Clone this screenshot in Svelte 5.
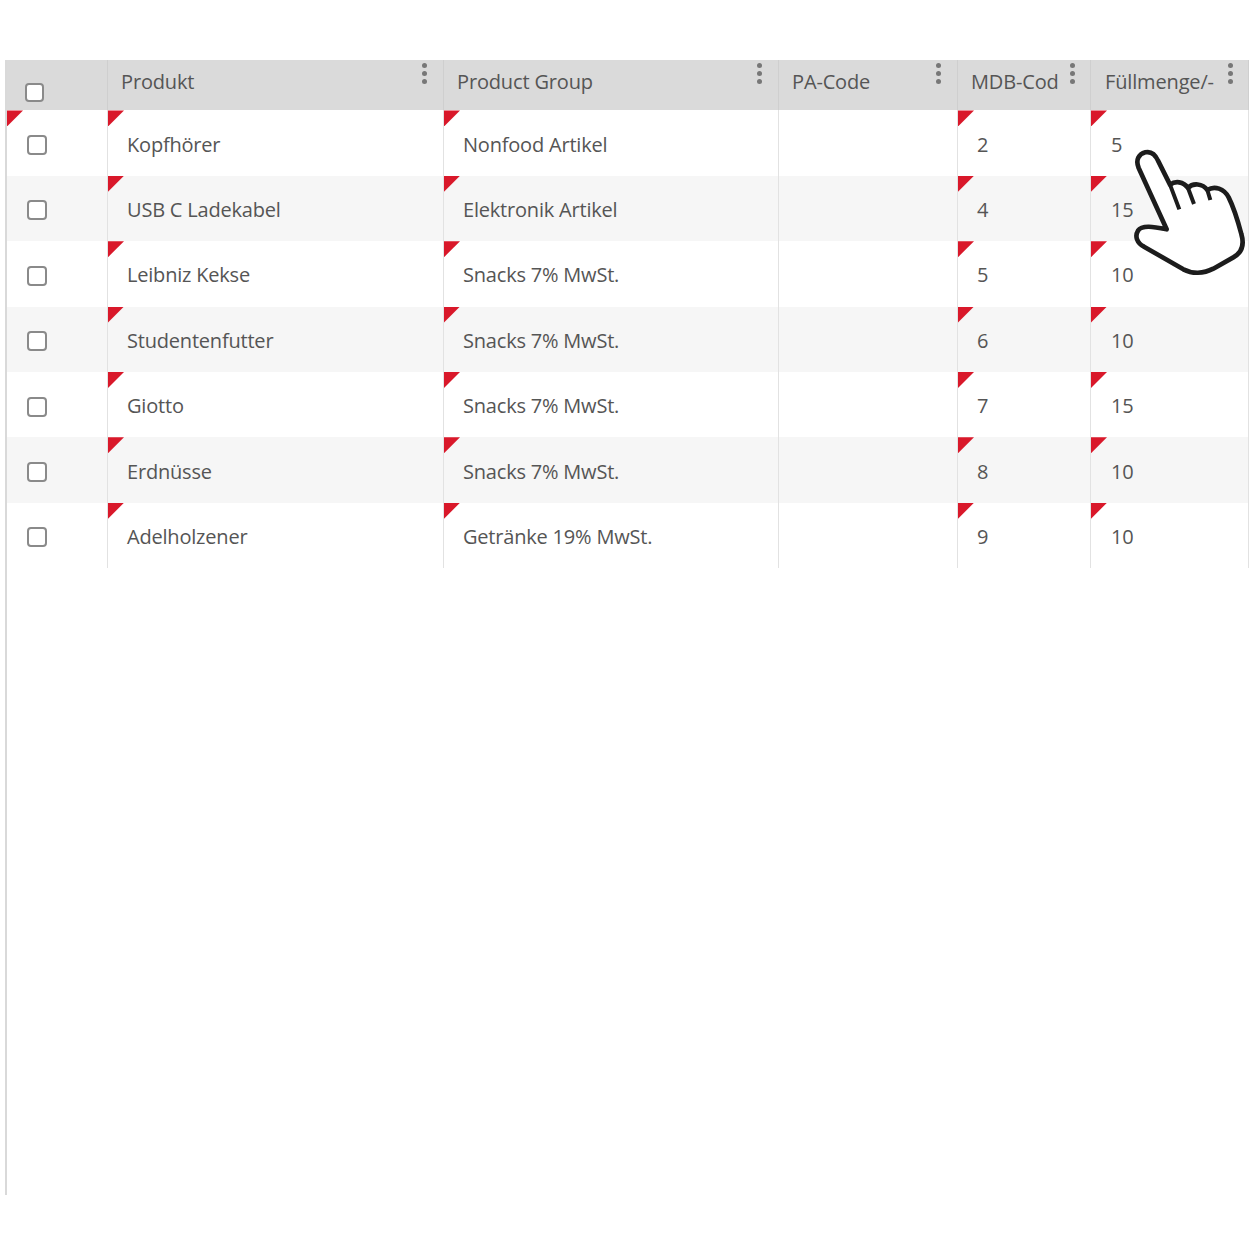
<script>
  const columns = ['Produkt', 'Product Group', 'PA-Code', 'MDB-Cod', 'Füllmenge/-'];

  const rows = [
    { name: 'Kopfhörer', group: 'Nonfood Artikel', code: '2', fill: '5' },
    { name: 'USB C Ladekabel', group: 'Elektronik Artikel', code: '4', fill: '15' },
    { name: 'Leibniz Kekse', group: 'Snacks 7% MwSt.', code: '5', fill: '10' },
    { name: 'Studentenfutter', group: 'Snacks 7% MwSt.', code: '6', fill: '10' },
    { name: 'Giotto', group: 'Snacks 7% MwSt.', code: '7', fill: '15' },
    { name: 'Erdnüsse', group: 'Snacks 7% MwSt.', code: '8', fill: '10' },
    { name: 'Adelholzener', group: 'Getränke 19% MwSt.', code: '9', fill: '10' }
  ];
</script>

<div class="page">
  <div class="grid">
    <div class="head">
      <div class="head-cell check-head"><span class="checkbox"></span></div>
      {#each columns as col}
        <div class="head-cell">
          <span class="title">{col}</span>
          <span class="kebab"><i></i><i></i><i></i></span>
        </div>
      {/each}
    </div>

    {#each rows as row, i}
      <div class="row" class:striped={i % 2 === 1}>
        <div class="cell check-cell" class:dirty={i === 0}><span class="checkbox"></span></div>
        <div class="cell dirty">{row.name}</div>
        <div class="cell dirty">{row.group}</div>
        <div class="cell"></div>
        <div class="cell dirty">{row.code}</div>
        <div class="cell dirty">{row.fill}</div>
      </div>
    {/each}
  </div>

  <svg class="hand" viewBox="0 0 390 420" width="130" height="140" aria-hidden="true">
    <path
      class="hand-shape"
      d="M140 268 L56 84 C46 60 56 42 76 37 C94 33 106 44 114 62 L150 134 C166 122 190 124 204 144 C218 128 248 130 262 150 C284 136 312 146 326 172 C342 204 354 244 364 282 C374 316 366 338 340 352 L280 386 C250 402 216 402 190 388 L72 320 C50 308 44 288 54 272 C66 254 100 260 140 268 Z"
    />
    <path class="hand-line" d="M150 134 L178 208 M204 144 L222 192 M262 150 L271 180" />
  </svg>
</div>

<style>
  :global(body) {
    background: #fff;
  }

  .page {
    position: relative;
    height: 1250px;
    padding-top: 60px;
    box-sizing: border-box;
    font-family: "Open Sans", "Noto Sans", sans-serif;
    color: #555;
  }

  .grid {
    --cols: 100px 336px 335px 179px 133px 159px;
    width: 1244px;
    height: 1135px;
    margin-left: 5px;
    border-left: 2px solid #d9d9d9;
    box-sizing: border-box;
  }

  .head,
  .row {
    display: grid;
    grid-template-columns: var(--cols);
  }

  .head {
    height: 50.4px;
    background: #dadada;
  }

  .row {
    height: 65.4px;
    background: #fff;
  }

  .row.striped {
    background: #f6f6f6;
  }

  .head-cell {
    position: relative;
    display: flex;
    align-items: flex-start;
    padding: 8px 0 0 13px;
    border-left: 1px solid #cfcfcf;
    font-size: 20px;
    line-height: 27px;
    letter-spacing: -0.15px;
    color: #555;
    box-sizing: border-box;
    white-space: nowrap;
  }

  .head-cell:first-child {
    border-left: 0;
  }

  .head-cell:last-child {
    padding-left: 14px;
    border-right: 1px solid #cfcfcf;
  }

  .check-head {
    padding: 23px 0 0 18px;
  }

  .check-head .checkbox {
    width: 19px;
    height: 19px;
  }

  .kebab {
    position: absolute;
    top: 3px;
    right: 16px;
    display: flex;
    flex-direction: column;
    gap: 3px;
  }

  .head-cell:nth-last-child(-n + 2) .kebab {
    right: 15px;
  }

  .kebab i {
    width: 5px;
    height: 5px;
    border-radius: 50%;
    background: #777;
  }

  .cell {
    position: relative;
    display: flex;
    align-items: center;
    padding: 2px 0 0 19px;
    border-left: 1px solid #e2e2e2;
    font-size: 20px;
    letter-spacing: -0.2px;
    box-sizing: border-box;
    white-space: nowrap;
  }

  .cell:first-child {
    border-left: 0;
  }

  .cell:last-child {
    padding-left: 20px;
    border-right: 1px solid #e2e2e2;
  }

  .check-cell {
    padding: 4px 0 0 20px;
  }

  /* red marker in the corner of a changed cell */
  .dirty::before {
    content: "";
    position: absolute;
    top: 0;
    left: 0;
    width: 16px;
    height: 16px;
    background: #d9182a;
    clip-path: polygon(0 0, 100% 0, 0 100%);
  }

  .checkbox {
    display: block;
    width: 20px;
    height: 20px;
    border: 2px solid #8a8a8a;
    border-radius: 4px;
    background: #fff;
    box-sizing: border-box;
  }

  .hand {
    position: absolute;
    left: 1120px;
    top: 140px;
  }

  .hand-shape {
    fill: #fff;
    stroke: #1c1c1c;
    stroke-width: 14;
    stroke-linejoin: round;
  }

  .hand-line {
    fill: none;
    stroke: #1c1c1c;
    stroke-width: 12;
    stroke-linecap: butt;
  }
</style>
